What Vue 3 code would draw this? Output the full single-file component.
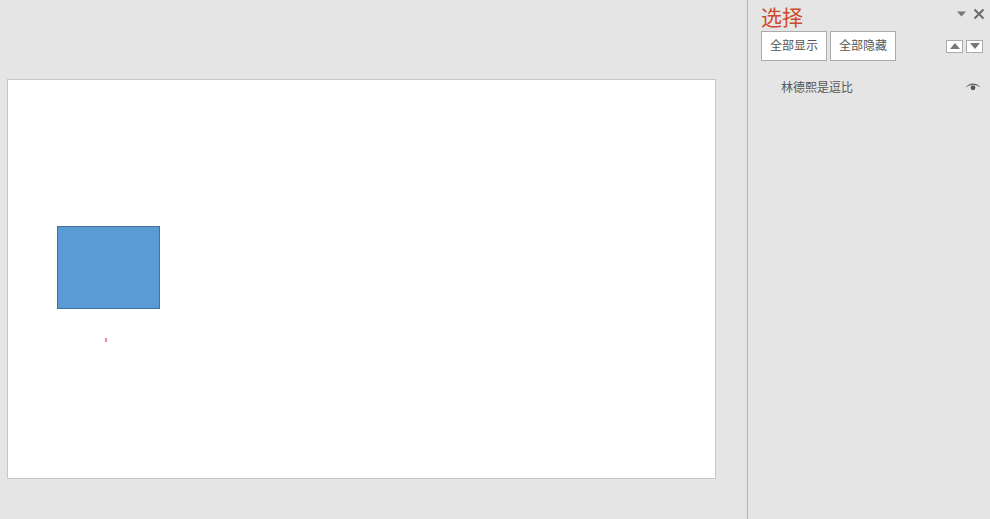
<template>
  <div class="app">
    <!-- slide area -->
    <div class="workspace">
      <div class="slide">
        <div class="shape"></div>
        <div class="mark"></div>
      </div>
    </div>

    <!-- selection pane -->
    <div class="pane">
      <div class="pane-head">
        <span class="title">选择</span>
        <div class="head-icons">
          <svg width="9" height="6" viewBox="0 0 9 6"><path d="M0 0.5h9L4.5 5.5z" fill="#777" /></svg>
          <svg width="12" height="12" viewBox="0 0 12 12"><path d="M1.5 1.5l9 9M10.5 1.5l-9 9" stroke="#6b6b6b" stroke-width="2" fill="none" /></svg>
        </div>
      </div>

      <div class="tools">
        <button class="btn">全部显示</button>
        <button class="btn">全部隐藏</button>
        <div class="order">
          <button class="arrow">
            <svg width="10" height="6" viewBox="0 0 10 6"><path d="M5 0l5 6H0z" fill="#777" /></svg>
          </button>
          <button class="arrow">
            <svg width="10" height="6" viewBox="0 0 10 6"><path d="M0 0h10L5 6z" fill="#777" /></svg>
          </button>
        </div>
      </div>

      <div v-for="item in items" :key="item" class="row">
        <span class="name">{{ item }}</span>
        <svg class="eye" width="16" height="8" viewBox="0 0 16 8">
          <path d="M0.5 4.5C3 1.6 5.5 0.6 8 0.6S13 1.6 15.5 4.5C13 2.8 10.5 2 8 2S3 2.8 0.5 4.5z" fill="#666" />
          <circle cx="8" cy="4.8" r="2.4" fill="#555" />
        </svg>
      </div>
    </div>
  </div>
</template>

<script setup>
const items = ['林德熙是逗比']
</script>

<style>
html,
body {
  margin: 0;
  background: #e5e5e5;
}
</style>

<style scoped>
.app {
  display: flex;
  width: 990px;
  height: 519px;
  overflow: hidden;
  background: #e5e5e5;
  font-family: "Noto Sans CJK SC", "Liberation Sans", sans-serif;
}

.workspace {
  width: 747px;
  padding: 79px 0 0 7px;
  box-sizing: border-box;
}

.slide {
  position: relative;
  width: 709px;
  height: 400px;
  box-sizing: border-box;
  background: #fff;
  border: 1px solid #c6c6c6;
}

.shape {
  position: absolute;
  left: 49px;
  top: 146px;
  width: 103px;
  height: 83px;
  box-sizing: border-box;
  background: #5b9bd5;
  border: 1px solid #41719c;
}

.mark {
  position: absolute;
  left: 97px;
  top: 258px;
  width: 2px;
  height: 4px;
  background: #e58aa6;
}

.pane {
  flex: 1;
  border-left: 1px solid #b4b4b4;
  padding: 0 5px 0 13px;
}

.pane-head {
  display: flex;
  justify-content: space-between;
  height: 31px;
}

.title {
  font-size: 21px;
  line-height: 32px;
  color: #cf4a2c;
}

.head-icons {
  display: flex;
  align-items: center;
  gap: 7px;
  height: 28px;
}

.tools {
  display: flex;
  align-items: center;
  gap: 3px;
}

.btn {
  width: 66px;
  height: 30px;
  padding: 0 0 3px;
  box-sizing: border-box;
  background: #fff;
  border: 1px solid #ababab;
  font-family: inherit;
  font-size: 12px;
  color: #555;
}

.order {
  display: flex;
  gap: 3px;
  margin-left: auto;
  margin-right: 2px;
}

.arrow {
  display: flex;
  align-items: center;
  justify-content: center;
  width: 17px;
  height: 13px;
  padding: 0;
  box-sizing: border-box;
  background: #fff;
  border: 1px solid #ababab;
}

.row {
  display: flex;
  align-items: center;
  justify-content: space-between;
  height: 24px;
  margin-top: 13px;
  padding: 0 4px 0 20px;
}

.name {
  font-size: 12px;
  color: #555;
}

.eye {
  margin-top: 1px;
}
</style>
